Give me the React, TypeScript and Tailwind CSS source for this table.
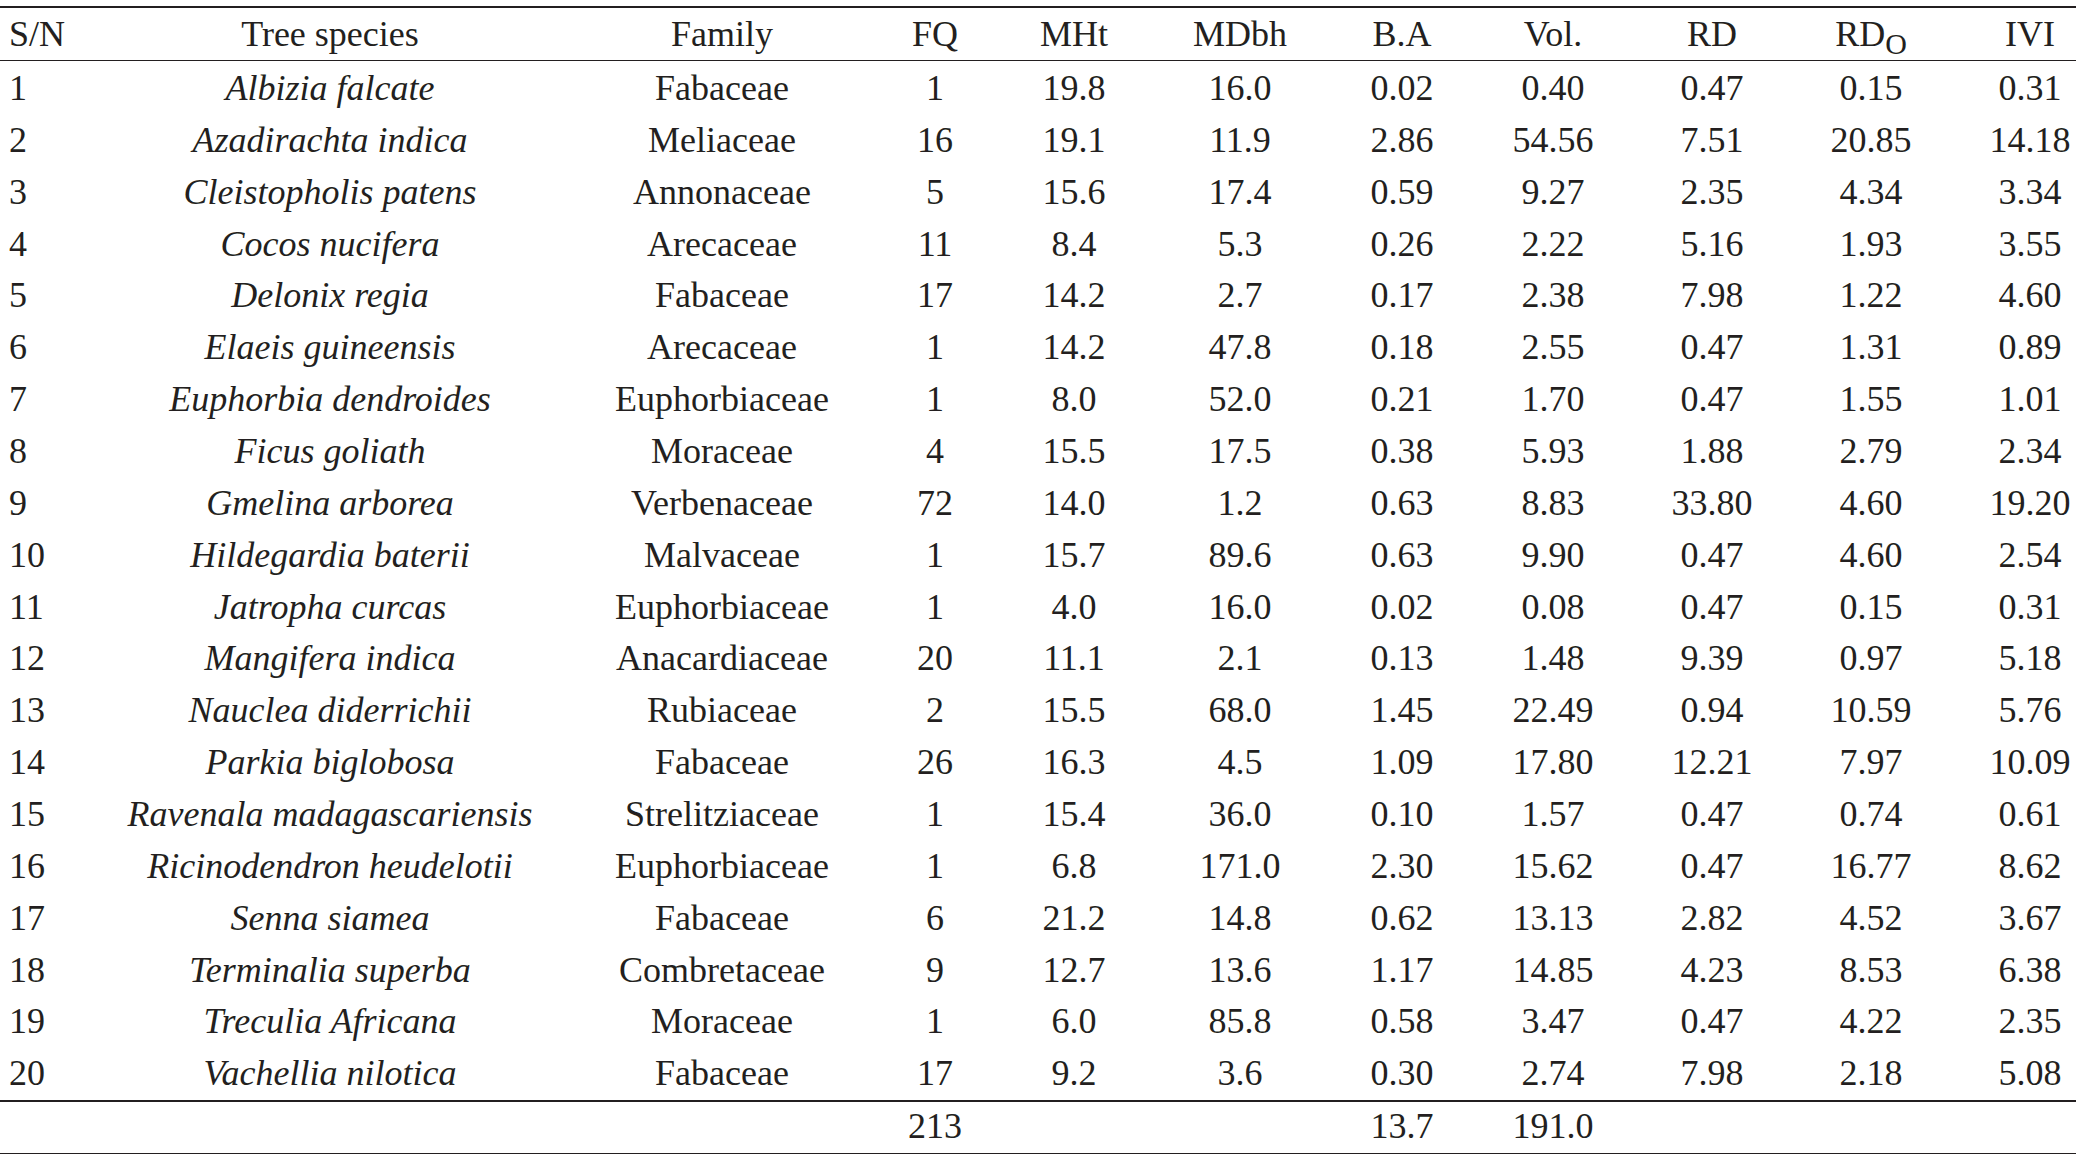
import React from "react";

type Row = [string, string, string, string, string, string, string, string, string, string, string];

const rows: Row[] = [
  ["1", "Albizia falcate", "Fabaceae", "1", "19.8", "16.0", "0.02", "0.40", "0.47", "0.15", "0.31"],
  ["2", "Azadirachta indica", "Meliaceae", "16", "19.1", "11.9", "2.86", "54.56", "7.51", "20.85", "14.18"],
  ["3", "Cleistopholis patens", "Annonaceae", "5", "15.6", "17.4", "0.59", "9.27", "2.35", "4.34", "3.34"],
  ["4", "Cocos nucifera", "Arecaceae", "11", "8.4", "5.3", "0.26", "2.22", "5.16", "1.93", "3.55"],
  ["5", "Delonix regia", "Fabaceae", "17", "14.2", "2.7", "0.17", "2.38", "7.98", "1.22", "4.60"],
  ["6", "Elaeis guineensis", "Arecaceae", "1", "14.2", "47.8", "0.18", "2.55", "0.47", "1.31", "0.89"],
  ["7", "Euphorbia dendroides", "Euphorbiaceae", "1", "8.0", "52.0", "0.21", "1.70", "0.47", "1.55", "1.01"],
  ["8", "Ficus goliath", "Moraceae", "4", "15.5", "17.5", "0.38", "5.93", "1.88", "2.79", "2.34"],
  ["9", "Gmelina arborea", "Verbenaceae", "72", "14.0", "1.2", "0.63", "8.83", "33.80", "4.60", "19.20"],
  ["10", "Hildegardia baterii", "Malvaceae", "1", "15.7", "89.6", "0.63", "9.90", "0.47", "4.60", "2.54"],
  ["11", "Jatropha curcas", "Euphorbiaceae", "1", "4.0", "16.0", "0.02", "0.08", "0.47", "0.15", "0.31"],
  ["12", "Mangifera indica", "Anacardiaceae", "20", "11.1", "2.1", "0.13", "1.48", "9.39", "0.97", "5.18"],
  ["13", "Nauclea diderrichii", "Rubiaceae", "2", "15.5", "68.0", "1.45", "22.49", "0.94", "10.59", "5.76"],
  ["14", "Parkia biglobosa", "Fabaceae", "26", "16.3", "4.5", "1.09", "17.80", "12.21", "7.97", "10.09"],
  ["15", "Ravenala madagascariensis", "Strelitziaceae", "1", "15.4", "36.0", "0.10", "1.57", "0.47", "0.74", "0.61"],
  ["16", "Ricinodendron heudelotii", "Euphorbiaceae", "1", "6.8", "171.0", "2.30", "15.62", "0.47", "16.77", "8.62"],
  ["17", "Senna siamea", "Fabaceae", "6", "21.2", "14.8", "0.62", "13.13", "2.82", "4.52", "3.67"],
  ["18", "Terminalia superba", "Combretaceae", "9", "12.7", "13.6", "1.17", "14.85", "4.23", "8.53", "6.38"],
  ["19", "Treculia Africana", "Moraceae", "1", "6.0", "85.8", "0.58", "3.47", "0.47", "4.22", "2.35"],
  ["20", "Vachellia nilotica", "Fabaceae", "17", "9.2", "3.6", "0.30", "2.74", "7.98", "2.18", "5.08"],
];

// column widths chained so each centre lands where the printed table has it
const cols = "grid grid-cols-[54px_552px_232px_194px_84px_248px_76px_226px_92px_226px_92px]";

function Cells({ cells, italicSecond }: { cells: React.ReactNode[]; italicSecond?: boolean }) {
  return (
    <>
      {cells.map((c, i) => (
        <div
          key={i}
          className={`whitespace-nowrap ${i === 0 ? "pl-[9px] text-left" : "flex justify-center"} ${i === 1 && italicSecond ? "italic" : ""}`}
        >
          {c}
        </div>
      ))}
    </>
  );
}

export default function App() {
  const header: React.ReactNode[] = [
    "S/N",
    "Tree species",
    "Family",
    "FQ",
    "MHt",
    "MDbh",
    "B.A",
    "Vol.",
    "RD",
    <span key="rdo">
      RD<span className="text-[30px] leading-none align-[-8px]">O</span>
    </span>,
    "IVI",
  ];

  return (
    <div
      className="min-h-screen w-[2080px] bg-white pt-[6px] text-[36px] text-[#231f20]"
      style={{ fontFamily: '"Liberation Serif", "Times New Roman", serif' }}
    >
      <div className="w-[2076px]">
        {/* Header */}
        <div className={`${cols} h-[55px] border-t-2 border-b border-[#231f20] leading-[52px]`}>
          <Cells cells={header} />
        </div>

        {/* Body */}
        <div className="border-b-2 border-[#231f20] pt-[2px]">
          {rows.map((r) => (
            <div key={r[0]} className={`${cols} h-[51.87px] leading-[51.87px]`}>
              <Cells cells={r} italicSecond />
            </div>
          ))}
        </div>

        {/* Totals */}
        <div className={`${cols} h-[52px] border-b border-[#231f20] pb-[2px] leading-[49px]`}>
          <Cells cells={["", "", "", "213", "", "", "13.7", "191.0", "", "", ""]} />
        </div>
      </div>
    </div>
  );
}
